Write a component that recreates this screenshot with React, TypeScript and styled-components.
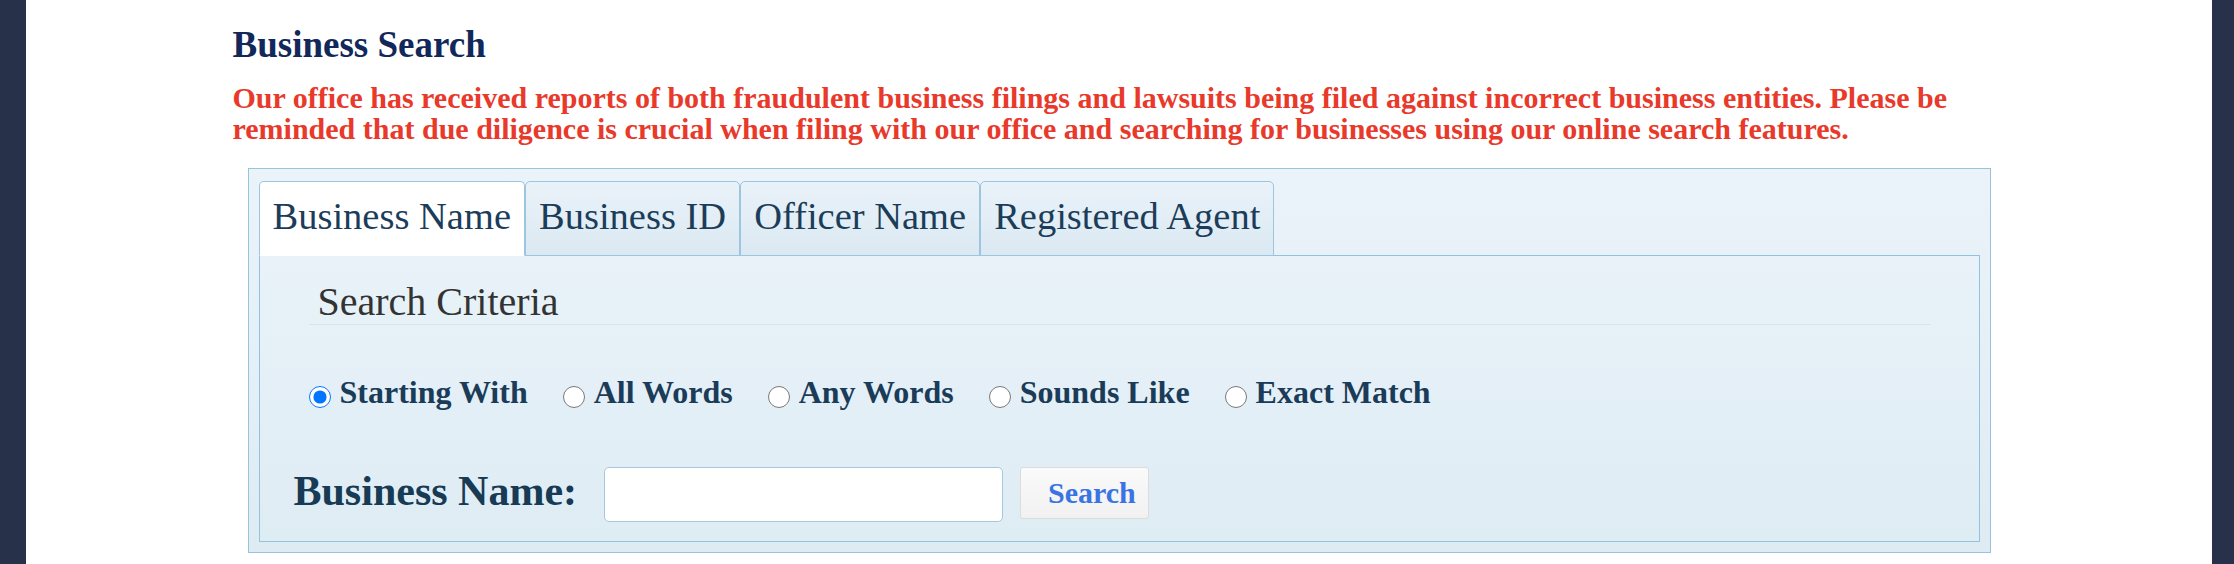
import React from "react";
import styled, { createGlobalStyle } from "styled-components";

const GlobalStyle = createGlobalStyle`
  html, body {
    margin: 0;
    padding: 0;
    background: #ffffff;
  }
  body {
    font-family: "Liberation Serif", "Times New Roman", serif;
  }
`;

const Page = styled.div`
  display: flex;
  min-height: 564px;
`;

const Rail = styled.div<{ $width: number }>`
  flex: 0 0 ${(p) => p.$width}px;
  background: #27314a;
`;

const Main = styled.main`
  flex: 1;
  background: #ffffff;
  padding-top: 24px;
`;

const Column = styled.div`
  width: 1773px;
  margin: 0 auto;
`;

const Title = styled.h2`
  margin: 0;
  font-size: 37px;
  line-height: 42px;
  font-weight: 700;
  color: #12285a;
`;

const Notice = styled.p`
  margin: 16px 0 0;
  font-size: 30px;
  line-height: 31px;
  font-weight: 700;
  color: #e8392b;
`;

const SearchBox = styled.section`
  margin: 24px 15px 0;
  padding: 12px 10px 10px;
  border: 1px solid #97c3db;
  background: linear-gradient(to bottom, #ebf3fa, #deebf3);
`;

const TabList = styled.div`
  display: flex;
  margin-bottom: -1px;
  position: relative;
  z-index: 1;
`;

const Tab = styled.button<{ $active?: boolean }>`
  font-family: inherit;
  font-size: 38.5px;
  line-height: 43px;
  font-weight: 400;
  color: #1b3d59;
  padding: 13px 13px 17px;
  margin: 0;
  border: 1px solid #9cc6df;
  border-bottom-color: ${(p) => (p.$active ? "#ffffff" : "#9cc6df")};
  border-radius: 5px 5px 0 0;
  background: ${(p) =>
    p.$active ? "#ffffff" : "linear-gradient(to bottom, #eaf2f9, #dbe9f2)"};
  cursor: pointer;
  white-space: nowrap;
`;

const Panel = styled.div`
  border: 1px solid #8fc3e0;
  background: linear-gradient(to bottom, #e9f2f9, #deecf4);
  padding: 24px 0 19px;
`;

const Criteria = styled.div`
  margin: 0 48px 0 49px;
`;

const Legend = styled.div`
  padding-left: 9px;
  font-size: 40px;
  line-height: 44px;
  color: #333333;
  border-bottom: 1px solid #e0e3e6;
`;

const RadioRow = styled.div`
  display: flex;
  gap: 35px;
  margin-top: 49px;
`;

const RadioItem = styled.label`
  display: block;
  white-space: nowrap;
  font-size: 32px;
  line-height: 36px;
  font-weight: 700;
  color: #1a3c58;
  cursor: pointer;
`;

const Radio = styled.input`
  width: 22px;
  height: 22px;
  margin: 0 9px 0 0;
  vertical-align: -5px;
`;

const FieldRow = styled.div`
  display: flex;
  align-items: flex-start;
  margin: 57px 0 0 34px;
`;

const FieldLabel = styled.label`
  margin-top: 1px;
  font-size: 42px;
  line-height: 46px;
  font-weight: 700;
  color: #173a55;
  white-space: nowrap;
`;

const TextInput = styled.input`
  box-sizing: border-box;
  width: 399px;
  height: 55px;
  margin-left: 27px;
  padding: 0 12px;
  border: 1px solid #a6c8dc;
  border-radius: 5px;
  background: #ffffff;
  font-family: inherit;
  font-size: 26px;
  outline: none;
`;

const SearchButton = styled.button`
  box-sizing: border-box;
  height: 52px;
  margin-left: 17px;
  padding: 0 12px 0 27px;
  border: 1px solid #dcdcdc;
  border-radius: 3px;
  background: linear-gradient(to bottom, #fafafa, #f1f1f1);
  font-family: inherit;
  font-size: 30px;
  line-height: 50px;
  font-weight: 700;
  color: #3a74e2;
  cursor: pointer;
`;

const tabs = ["Business Name", "Business ID", "Officer Name", "Registered Agent"];
const modes = ["Starting With", "All Words", "Any Words", "Sounds Like", "Exact Match"];

export default function App() {
  return (
    <>
      <GlobalStyle />
      <Page>
        <Rail $width={26} />
        <Main>
          <Column>
            <Title>Business Search</Title>
            <Notice>
              Our office has received reports of both fraudulent business filings and lawsuits
              being filed against incorrect business entities. Please be reminded that due
              diligence is crucial when filing with our office and searching for businesses
              using our online search features.
            </Notice>
            <SearchBox>
              <TabList>
                {tabs.map((t, i) => (
                  <Tab key={t} $active={i === 0}>
                    {t}
                  </Tab>
                ))}
              </TabList>
              <Panel>
                <Criteria>
                  <Legend>Search Criteria</Legend>
                  <RadioRow>
                    {modes.map((m, i) => (
                      <RadioItem key={m}>
                        <Radio type="radio" name="mode" defaultChecked={i === 0} />
                        {m}
                      </RadioItem>
                    ))}
                  </RadioRow>
                </Criteria>
                <FieldRow>
                  <FieldLabel htmlFor="bizname">Business Name:</FieldLabel>
                  <TextInput id="bizname" type="text" />
                  <SearchButton type="button">Search</SearchButton>
                </FieldRow>
              </Panel>
            </SearchBox>
          </Column>
        </Main>
        <Rail $width={22} />
      </Page>
    </>
  );
}
